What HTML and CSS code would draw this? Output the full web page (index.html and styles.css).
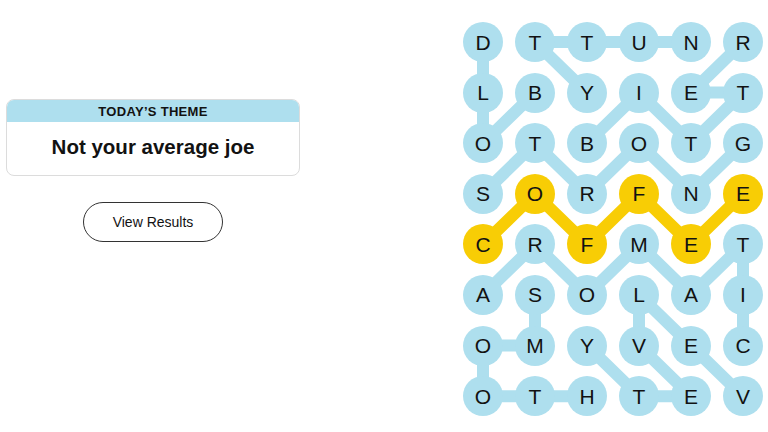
FILE: index.html
```
<!DOCTYPE html>
<html>
<head>
<meta charset="utf-8">
<link rel="stylesheet" href="styles.css">
</head>
<body>
<main class="page">
  <section class="side">
    <div class="theme-card">
      <div class="theme-head">TODAY’S THEME</div>
      <div class="theme-body">Not your average joe</div>
    </div>
    <button class="results-btn">View Results</button>
  </section>
  <section class="board">
    <svg class="links" width="300" height="395" viewBox="0 0 300 395">
      <g class="blue" stroke="#aedfee" stroke-width="12" stroke-linecap="round" fill="none" id="blue"></g>
      <g class="yellow" stroke="#f8cd05" stroke-width="12" stroke-linecap="round" fill="none" id="yellow"></g>
    </svg>
    <div class="grid" id="grid"></div>
  </section>
</main>
<script src="app.js"></script>
</body>
</html>
```
FILE: styles.css
```
* { box-sizing: border-box; }
html, body { margin: 0; padding: 0; background: #fff; }
body { font-family: "Liberation Sans", Arial, sans-serif; color: #121212; width: 768px; height: 432px; overflow: hidden; }
.page { display: flex; align-items: flex-start; }
.side { width: 300px; padding: 99px 0 0 6px; display: flex; flex-direction: column; align-items: center; }
.theme-card { width: 294px; border: 1px solid #dcdcdc; border-radius: 8px; overflow: hidden; }
.theme-head { background: #aedfee; height: 22px; line-height: 23px; text-align: center; font-size: 13px; font-weight: 700; letter-spacing: 0.3px; color: #121212; }
.theme-body { height: 53px; display: flex; align-items: center; justify-content: center; font-size: 20.5px; font-weight: 700; padding-bottom: 4px; }
.results-btn { margin-top: 26px; width: 140px; height: 40px; border: 1px solid #333; border-radius: 20px; background: #fff; font-family: "Liberation Sans", Arial, sans-serif; font-size: 14px; color: #121212; padding: 0; }
.board { position: relative; margin-left: 163px; margin-top: 22px; width: 300px; height: 395px; }
.links { position: absolute; left: 0; top: 0; }
.grid { position: relative; display: grid; grid-template-columns: repeat(6, 40px); grid-auto-rows: 40px; column-gap: 12px; row-gap: 10.6px; }
.cell { width: 40px; height: 40px; border-radius: 50%; background: #aedfee; display: flex; align-items: center; justify-content: center; font-size: 21px; color: #121212; padding-top: 1px; }
.cell.found { background: #f8cd05; }
```
FILE: app.js
```
var rows = ["DTTUNR","LBYIET","OTBOTG","SORFNE","CRFMET","ASOLAI","OMYVEC","OTHTEV"];
var yellowCells = ["4,0","3,1","4,2","3,3","4,4","3,5"];
var grid = document.getElementById("grid");
rows.forEach(function (row, r) {
  row.split("").forEach(function (ch, c) {
    var d = document.createElement("div");
    d.className = "cell" + (yellowCells.indexOf(r + "," + c) >= 0 ? " found" : "");
    d.textContent = ch;
    grid.appendChild(d);
  });
});
var blue = [[0,0,1,0],[1,0,2,0],[2,0,1,1],[0,1,0,2],[0,2,0,3],[0,3,0,4],[0,1,1,2],[0,5,1,4],[1,4,1,5],[1,3,2,2],[1,3,2,4],[2,4,1,5],[2,1,3,0],[2,1,3,2],[3,2,2,3],[2,3,3,4],[3,4,2,5],[5,0,4,1],[4,1,5,2],[5,2,4,3],[4,3,5,4],[5,4,4,5],[4,5,5,5],[5,1,6,1],[6,0,6,1],[5,3,6,3],[5,3,6,4],[5,5,6,5],[6,0,7,0],[7,0,7,1],[7,1,7,2],[6,2,7,3],[7,3,7,4],[6,3,7,4],[6,4,7,5]];
var yellow = [[4,0,3,1],[3,1,4,2],[4,2,3,3],[3,3,4,4],[4,4,3,5]];
function draw(list, id) {
  var g = document.getElementById(id);
  list.forEach(function (s) {
    var l = document.createElementNS("http://www.w3.org/2000/svg", "line");
    l.setAttribute("x1", 20 + 52 * s[1]);
    l.setAttribute("y1", 20 + 50.6 * s[0]);
    l.setAttribute("x2", 20 + 52 * s[3]);
    l.setAttribute("y2", 20 + 50.6 * s[2]);
    g.appendChild(l);
  });
}
draw(blue, "blue");
draw(yellow, "yellow");
```
